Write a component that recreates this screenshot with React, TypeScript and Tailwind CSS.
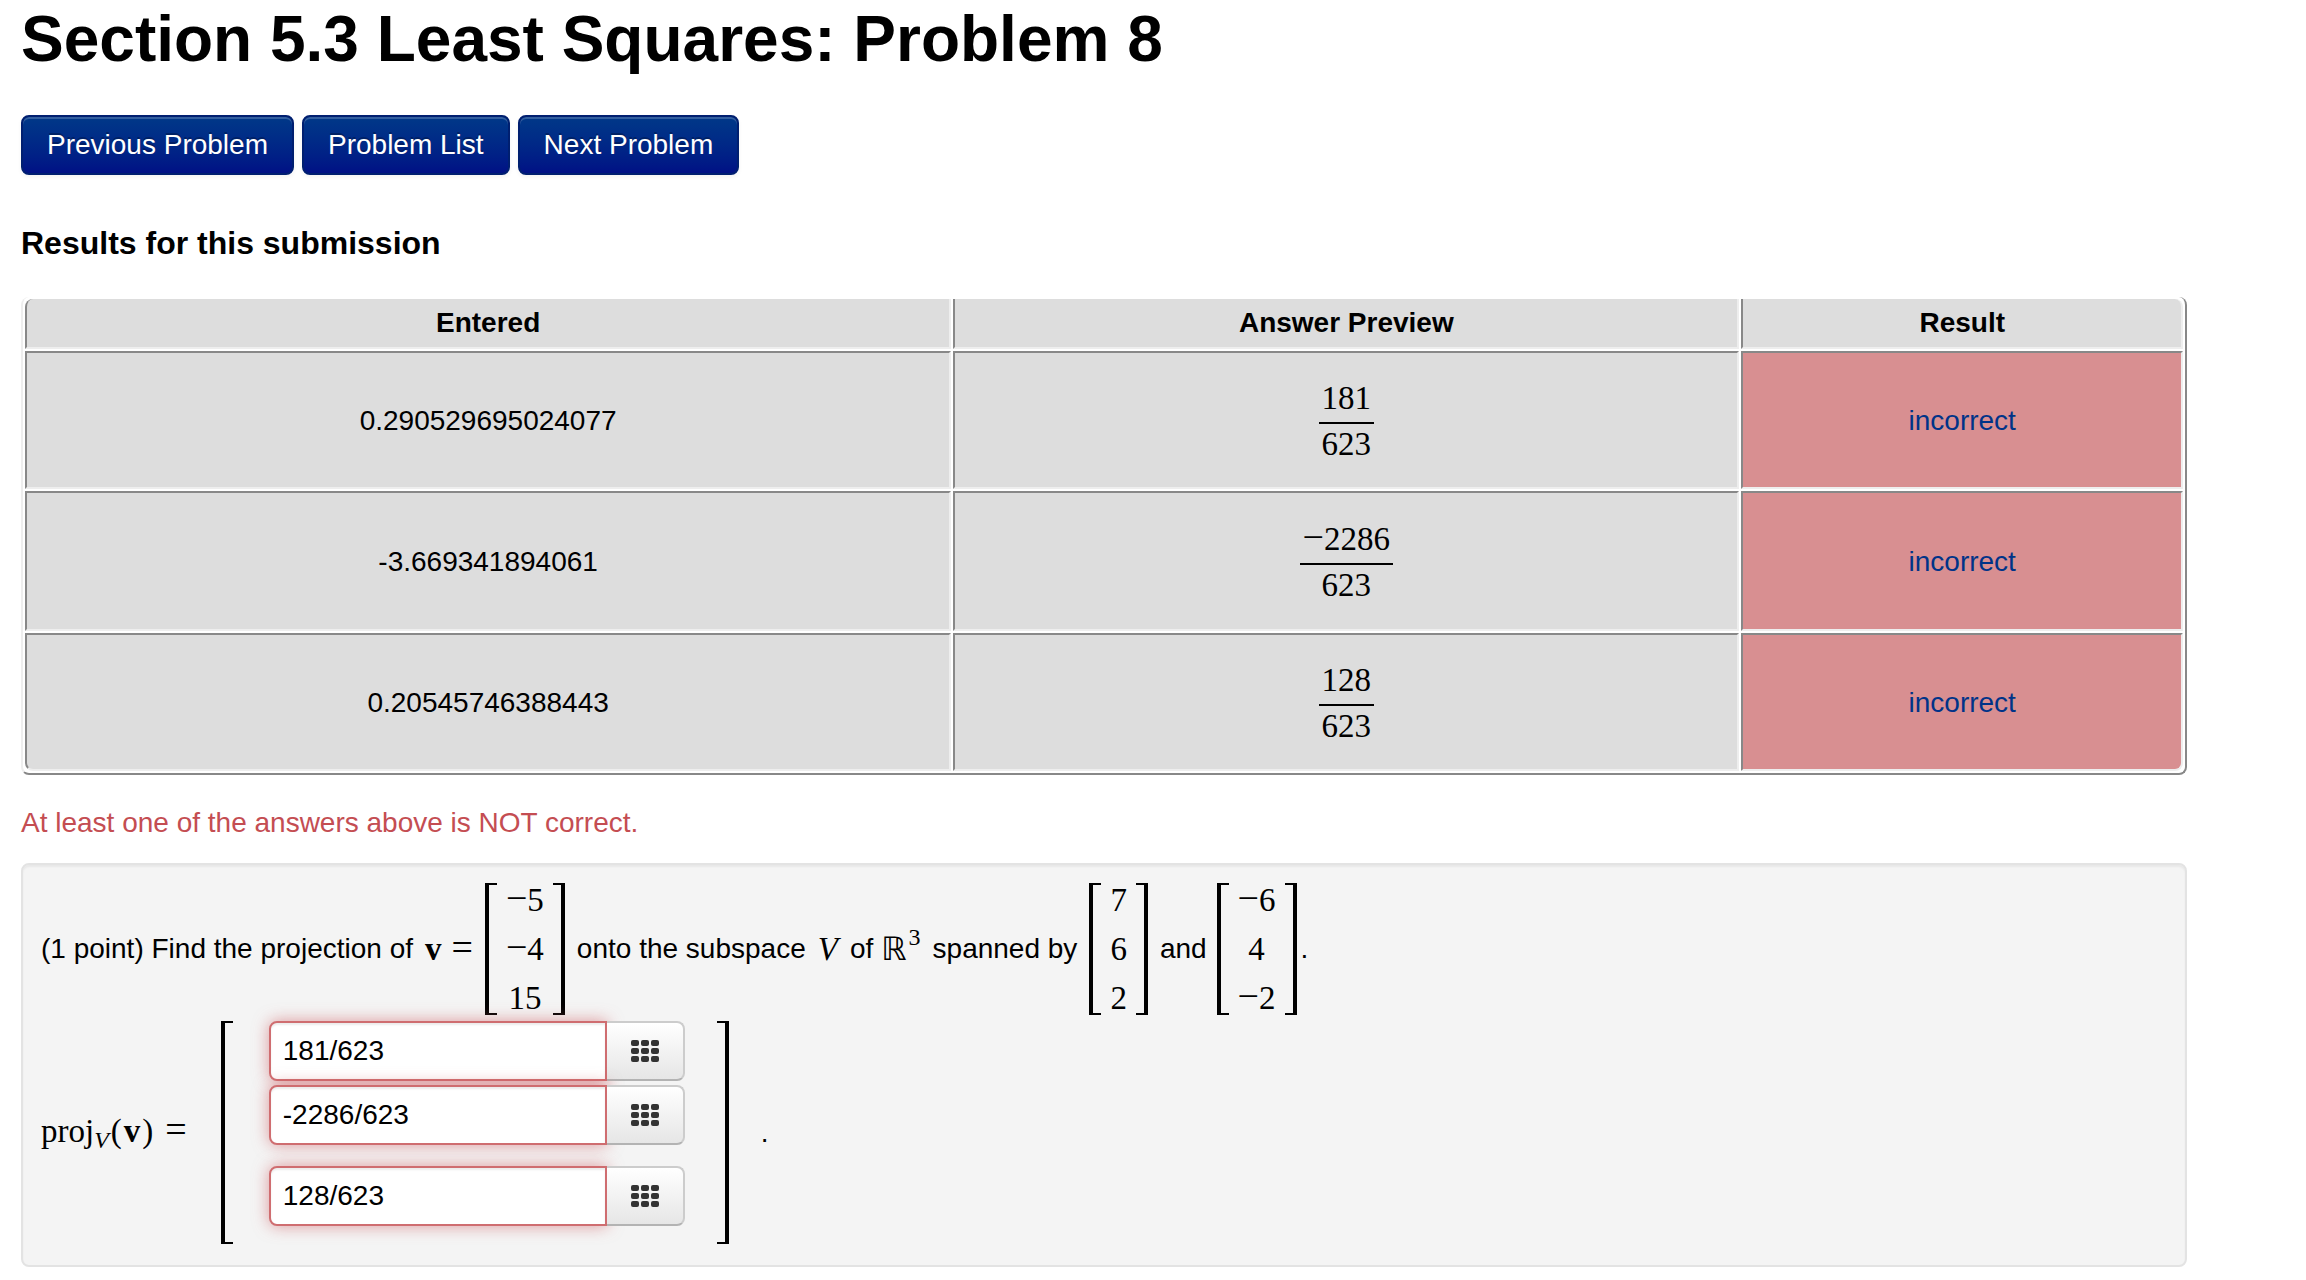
import { useState } from "react";
import type { ReactNode } from "react";

const results = [
  { entered: "0.290529695024077", top: "181", bottom: "623" },
  { entered: "-3.669341894061", top: "−2286", bottom: "623" },
  { entered: "0.20545746388443", top: "128", bottom: "623" },
];

const cellBorder = "border-l-2 border-l-[#888888] border-r-2 border-r-[#eeeeee] border-b-2 border-b-[#eeeeee]";
const serif = "font-['Liberation_Serif',serif] text-[33px] leading-[34px]";

function NavButton({ children }: { children: ReactNode }) {
  return (
    <button
      type="button"
      className="h-[60px] rounded-lg border-2 border-[#001f70] bg-linear-to-b from-[#003888] to-[#001085] px-6 text-white shadow-[inset_0_2px_0_rgba(255,255,255,0.2),0_2px_4px_rgba(0,0,0,0.05)] text-shadow-[0_-2px_0_rgba(0,0,0,0.25)]"
    >
      {children}
    </button>
  );
}

// Operators are set a little wider than the digits
function Op({ children }: { children: ReactNode }) {
  return <span className="text-[38px] leading-[26px]">{children}</span>;
}

function MathNumber({ value }: { value: string }) {
  if (!value.startsWith("−")) return <span>{value}</span>;
  return (
    <span className="flex h-[34px] items-baseline">
      <Op>−</Op>
      {value.slice(1)}
    </span>
  );
}

function Fraction({ top, bottom }: { top: string; bottom: string }) {
  return (
    <div className={`inline-flex flex-col items-center align-middle ${serif}`}>
      <div className="border-b-2 border-black px-[3px] pb-[7px]">
        <MathNumber value={top} />
      </div>
      <span className="pt-[3px]">{bottom}</span>
    </div>
  );
}

// Square brackets that stretch to whatever they wrap
function Brackets({ children }: { children: ReactNode }) {
  return (
    <div className="flex items-stretch">
      <span className="w-3 border-y-2 border-l-4 border-black"></span>
      {children}
      <span className="w-3 border-y-2 border-r-4 border-black"></span>
    </div>
  );
}

function Vector({ entries }: { entries: string[] }) {
  return (
    <Brackets>
      <div className={`flex flex-col items-center gap-[15px] px-[9px] ${serif}`}>
        {entries.map((e) => (
          <MathNumber key={e} value={e} />
        ))}
      </div>
    </Brackets>
  );
}

function GridIcon() {
  return (
    <svg width="28" height="22" viewBox="0 0 28 22" fill="#333333" aria-hidden="true">
      {[0, 8, 16].map((y) =>
        [0, 10, 20].map((x) => <rect key={`${x}-${y}`} x={x} y={y} width="8" height="6" rx="2" />)
      )}
    </svg>
  );
}

function AnswerField({ label, initial }: { label: string; initial: string }) {
  const [value, setValue] = useState(initial);
  return (
    <div className="flex h-[60px]">
      <input
        type="text"
        aria-label={label}
        value={value}
        onChange={(e) => setValue(e.target.value)}
        className="w-[338px] rounded-l-lg border-2 border-[#cf6d70] bg-white px-3 shadow-[inset_0_2px_2px_rgba(0,0,0,0.075),0_0_16px_rgba(205,90,95,0.6)] outline-none"
      />
      <button
        type="button"
        aria-label={`Open equation editor for ${label}`}
        className="flex w-[78px] items-center justify-center rounded-r-lg border-2 border-l-0 border-[#cccccc] border-b-[#b3b3b3] bg-linear-to-b from-white to-[#e6e6e6]"
      >
        <GridIcon />
      </button>
    </div>
  );
}

export default function App() {
  return (
    <main className="bg-white pr-[119px] pl-[21px] font-['Liberation_Sans',Arial,sans-serif] text-[28px] leading-10 text-black">
      <h1 className="text-[64px] leading-[78px] font-bold">Section 5.3 Least Squares: Problem 8</h1>

      <nav className="mt-[37px] flex gap-2">
        <NavButton>Previous Problem</NavButton>
        <NavButton>Problem List</NavButton>
        <NavButton>Next Problem</NavButton>
      </nav>

      <h2 className="mt-12 text-[32px] leading-10 font-bold">Results for this submission</h2>

      <table className="mt-[34px] w-full table-fixed border-separate border-spacing-[2px] rounded-lg border-r-2 border-b-2 border-l-2 border-r-[#888888] border-b-[#888888] border-l-[#eeeeee] text-center">
        <thead>
          <tr className="h-[50px]">
            <th className={`w-[43%] rounded-tl-lg bg-[#dddddd] ${cellBorder}`}>Entered</th>
            <th className={`bg-[#dddddd] ${cellBorder}`}>Answer Preview</th>
            <th className={`w-[20.5%] rounded-tr-lg bg-[#dddddd] ${cellBorder}`}>Result</th>
          </tr>
        </thead>
        <tbody>
          {results.map((r, i) => (
            <tr key={r.entered} className={i === 1 ? "h-[140px]" : "h-[138px]"}>
              <td className={`border-t-2 border-t-[#888888] bg-[#dddddd] pt-[2px] ${cellBorder} ${i === 2 ? "rounded-bl-lg" : ""}`}>
                {r.entered}
              </td>
              <td className={`border-t-2 border-t-[#888888] bg-[#dddddd] pt-[2px] ${cellBorder}`}>
                <Fraction top={r.top} bottom={r.bottom} />
              </td>
              <td className={`border-t-2 border-t-[#888888] bg-[#d88f91] pt-[2px] ${cellBorder} ${i === 2 ? "rounded-br-lg" : ""}`}>
                <a href="#answer" className="text-[#003388]">
                  incorrect
                </a>
              </td>
            </tr>
          ))}
        </tbody>
      </table>

      <p className="mt-7 text-[#c44d52]">At least one of the answers above is NOT correct.</p>

      <section
        id="answer"
        className="mt-5 rounded-lg border-2 border-[#e3e3e3] bg-[#f4f4f4] px-[18px] pt-[18px] pb-[21px] shadow-[inset_0_2px_2px_rgba(0,0,0,0.05)]"
      >
        <div className="flex items-center whitespace-nowrap">
          <span>(1 point) Find the projection of</span>
          <span className={`mr-3 ml-3 flex h-[34px] items-baseline gap-[10px] ${serif}`}>
            <b>v</b>
            <Op>=</Op>
          </span>
          <Vector entries={["−5", "−4", "15"]} />
          <span className="ml-3">onto the subspace</span>
          <i className={`mr-3 ml-3 ${serif}`}>V</i>
          <span>of</span>
          <span className="mr-3 ml-2 flex items-center">
            <span className="font-['DejaVu_Sans',sans-serif] text-[32px]">ℝ</span>
            <sup className="top-0 ml-[2px] pb-6 font-['Liberation_Serif',serif] text-[24px] leading-10">3</sup>
          </span>
          <span className="mr-3">spanned by</span>
          <Vector entries={["7", "6", "2"]} />
          <span className="mr-[10px] ml-3">and</span>
          <Vector entries={["−6", "4", "−2"]} />
          <span className="ml-1">.</span>
        </div>

        <div className="mt-[6px] flex items-center">
          <span className={`mr-[34px] flex h-[38px] items-baseline ${serif}`}>
            <span>
              proj
              <sub className="text-[24px] italic">V</sub>
            </span>
            <span className="ml-[2px]">(</span>
            <b className="mx-[2px]">v</b>
            <span className="mr-3">)</span>
            <Op>=</Op>
          </span>
          <Brackets>
            <div className="flex flex-col pr-8 pb-[18px] pl-9">
              <AnswerField label="first entry" initial="181/623" />
              <div className="mt-1 mb-[21px]">
                <AnswerField label="second entry" initial="-2286/623" />
              </div>
              <AnswerField label="third entry" initial="128/623" />
            </div>
          </Brackets>
          <span className="ml-8">.</span>
        </div>
      </section>
    </main>
  );
}
